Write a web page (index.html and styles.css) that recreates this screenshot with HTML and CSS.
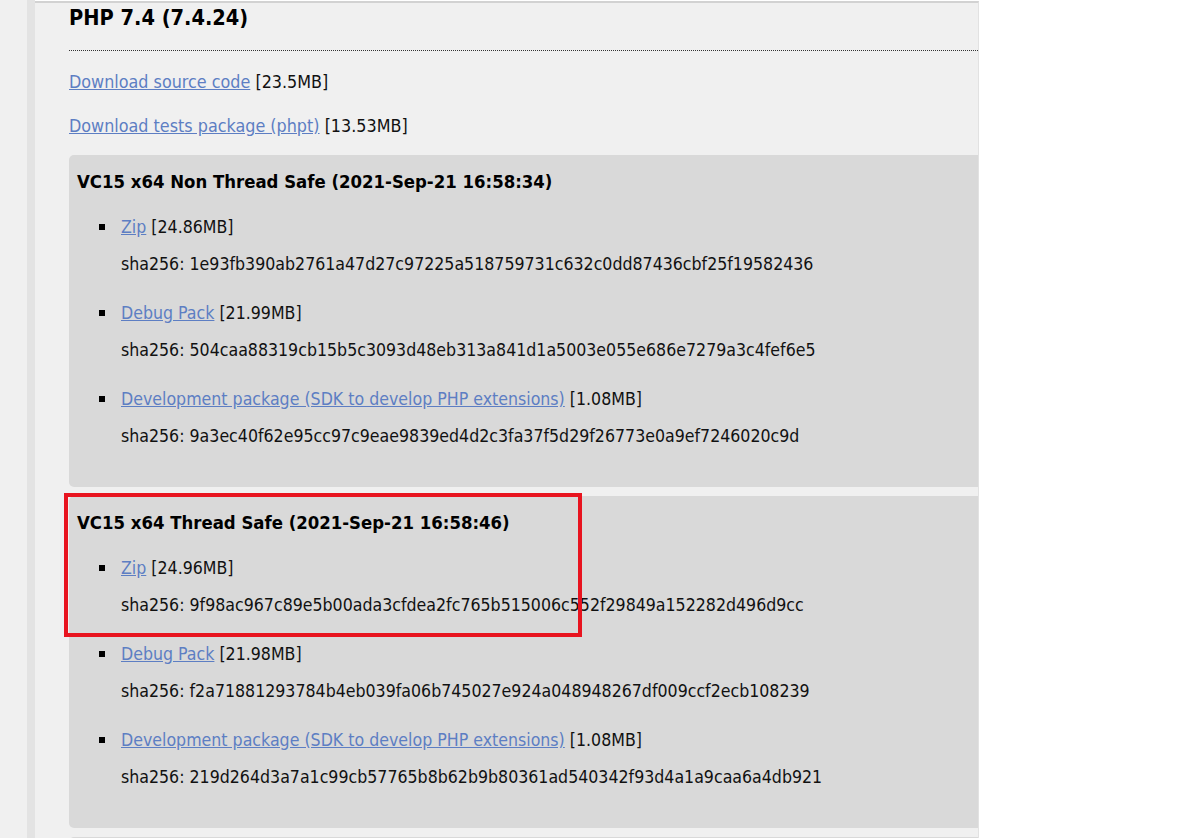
FILE: index.html
```html
<!DOCTYPE html>
<html lang="en">
<head>
<meta charset="utf-8">
<title>PHP 7.4 (7.4.24)</title>
<link rel="stylesheet" href="styles.css">
</head>
<body>
<div class="page">
  <div class="gutter"></div>
  <div class="stripe"></div>
  <main class="main">
    <h2 class="release-title">PHP 7.4 (7.4.24)</h2>
    <p class="dl"><a href="#">Download source code</a> [23.5MB]</p>
    <p class="dl"><a href="#">Download tests package (phpt)</a> [13.53MB]</p>

    <section class="build">
      <h4 class="build-title">VC15 x64 Non Thread Safe (2021-Sep-21 16:58:34)</h4>
      <ul class="files">
        <li><span class="row"><a href="#">Zip</a> [24.86MB]</span><span class="sha">sha256: 1e93fb390ab2761a47d27c97225a518759731c632c0dd87436cbf25f19582436</span></li>
        <li><span class="row"><a href="#">Debug Pack</a> [21.99MB]</span><span class="sha">sha256: 504caa88319cb15b5c3093d48eb313a841d1a5003e055e686e7279a3c4fef6e5</span></li>
        <li><span class="row"><a href="#">Development package (SDK to develop PHP extensions)</a> [1.08MB]</span><span class="sha">sha256: 9a3ec40f62e95cc97c9eae9839ed4d2c3fa37f5d29f26773e0a9ef7246020c9d</span></li>
      </ul>
    </section>

    <section class="build highlighted">
      <div class="highlight"></div>
      <h4 class="build-title">VC15 x64 Thread Safe (2021-Sep-21 16:58:46)</h4>
      <ul class="files">
        <li><span class="row"><a href="#">Zip</a> [24.96MB]</span><span class="sha">sha256: 9f98ac967c89e5b00ada3cfdea2fc765b515006c552f29849a152282d496d9cc</span></li>
        <li><span class="row"><a href="#">Debug Pack</a> [21.98MB]</span><span class="sha">sha256: f2a71881293784b4eb039fa06b745027e924a048948267df009ccf2ecb108239</span></li>
        <li><span class="row"><a href="#">Development package (SDK to develop PHP extensions)</a> [1.08MB]</span><span class="sha">sha256: 219d264d3a7a1c99cb57765b8b62b9b80361ad540342f93d4a1a9caa6a4db921</span></li>
      </ul>
    </section>

    <section class="build"></section>
  </main>
</div>
</body>
</html>
```
FILE: styles.css
```css
html, body {
  margin: 0;
  padding: 0;
  background: #ffffff;
}

body {
  font-family: "DejaVu Sans Condensed", "DejaVu Sans", sans-serif;
  font-stretch: condensed;
  color: #111111;
  height: 838px;
  overflow: hidden;
}

.page {
  display: flex;
  width: 979px;
  min-height: 838px;
}

.gutter {
  width: 27px;
  background: #f0f0f0;
  flex: none;
}

.stripe {
  width: 8px;
  background: #e3e3e3;
  flex: none;
}

.main {
  flex: 1;
  background: #f0f0f0;
  border-top: 2px solid #d2d2d2;
  border-right: 1px solid #e2e2e2;
  padding: 0 0 0 34px;
  margin-top: 1px;
}

.release-title {
  margin: 0;
  font-size: 21.6px;
  font-weight: bold;
  color: #000;
  line-height: 30px;
  padding: 0 0 17px 0;
  border-bottom: 1px dotted #333;
}

.dl {
  margin: 16px 0 0 0;
  font-size: 17.8px;
  line-height: 30px;
}

.dl + .dl {
  margin-top: 14px;
}

a {
  color: #5d7ec3;
  text-decoration: underline;
}

.build {
  position: relative;
  background: #d9d9d9;
  border-radius: 5px 0 0 5px;
  padding: 9px 8px 33px 8px;
  margin-top: 14px;
  font-size: 17.6px;
}

.build + .build {
  margin-top: 9px;
}

.build-title {
  margin: 0;
  font-size: 18.4px;
  font-weight: bold;
  line-height: 36px;
  color: #000;
}

.files {
  list-style: none;
  margin: 9px 0 0 0;
  padding: 0 0 0 22px;
}

.files li {
  display: grid;
  grid-template-columns: 22px auto;
  line-height: 36px;
}

.files li + li {
  margin-top: 13px;
}

.files li::before {
  content: "";
  width: 6px;
  height: 6px;
  background: #000;
  grid-row: 1;
  grid-column: 1;
  align-self: center;
}

.row {
  grid-row: 1;
  grid-column: 2;
}

.sha {
  grid-row: 2;
  grid-column: 2;
  margin-top: 1px;
}

.highlight {
  position: absolute;
  left: -5px;
  top: -3px;
  width: 510px;
  height: 136px;
  border: 4px solid #e8141f;
  pointer-events: none;
}
```
